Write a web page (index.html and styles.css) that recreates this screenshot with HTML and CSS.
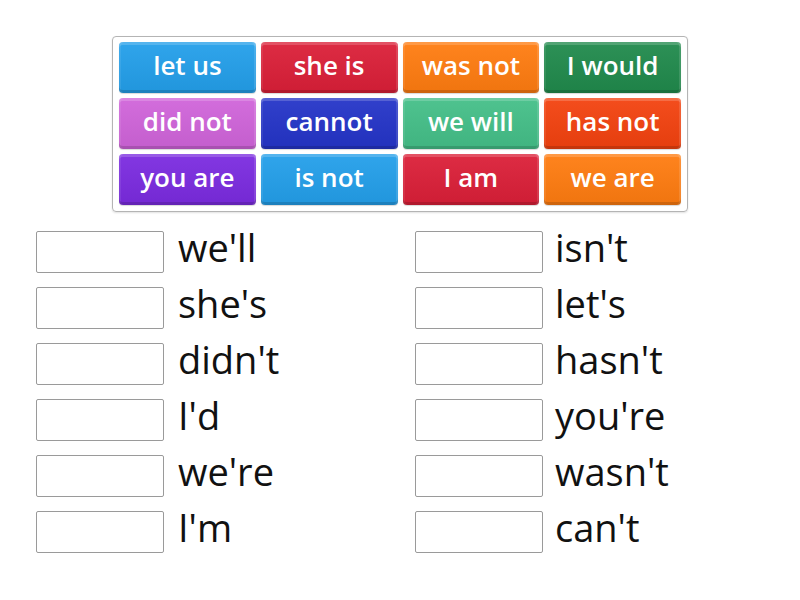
FILE: index.html
```html
<!DOCTYPE html>
<html>
<head>
<meta charset="utf-8">
<link rel="stylesheet" href="styles.css">
</head>
<body>
<div class="page">
  <div class="bank">
    <div class="tile c-blue">let us</div>
    <div class="tile c-red">she is</div>
    <div class="tile c-orange">was not</div>
    <div class="tile c-green">I would</div>
    <div class="tile c-orchid">did not</div>
    <div class="tile c-navy">cannot</div>
    <div class="tile c-mint">we will</div>
    <div class="tile c-vermil">has not</div>
    <div class="tile c-purple">you are</div>
    <div class="tile c-blue">is not</div>
    <div class="tile c-red">I am</div>
    <div class="tile c-orange">we are</div>
  </div>
  <div class="answers">
    <div class="row"><div class="slot"></div><span class="label">we'll</span></div>
    <div class="row right"><div class="slot"></div><span class="label">isn't</span></div>
    <div class="row"><div class="slot"></div><span class="label">she's</span></div>
    <div class="row right"><div class="slot"></div><span class="label">let's</span></div>
    <div class="row"><div class="slot"></div><span class="label">didn't</span></div>
    <div class="row right"><div class="slot"></div><span class="label">hasn't</span></div>
    <div class="row"><div class="slot"></div><span class="label">I'd</span></div>
    <div class="row right"><div class="slot"></div><span class="label">you're</span></div>
    <div class="row"><div class="slot"></div><span class="label">we're</span></div>
    <div class="row right"><div class="slot"></div><span class="label">wasn't</span></div>
    <div class="row"><div class="slot"></div><span class="label">I'm</span></div>
    <div class="row right"><div class="slot"></div><span class="label">can't</span></div>
  </div>
</div>
</body>
</html>
```
FILE: styles.css
```css
html, body {
  margin: 0;
  padding: 0;
  background: #ffffff;
}
body {
  font-family: "Open Sans", "Noto Sans", sans-serif;
  width: 800px;
  height: 600px;
  overflow: hidden;
}
.page {
  padding-top: 36px;
}
.bank {
  width: 562px;
  margin: 0 auto;
  border: 1px solid #b4b4b4;
  border-radius: 4px;
  box-shadow: 0 1px 2px rgba(0,0,0,0.12);
  padding: 5px 6px 6px;
  display: grid;
  grid-template-columns: repeat(4, 1fr);
  grid-auto-rows: 51px;
  gap: 5px;
}
.tile {
  border-radius: 4px;
  color: #ffffff;
  font-weight: 600;
  font-size: 26px;
  display: flex;
  align-items: center;
  justify-content: center;
  padding-bottom: 5px;
  box-sizing: border-box;
  box-shadow: inset 0 3px 0 rgba(255,255,255,0.18), inset 0 -3px 0 rgba(0,0,0,0.14), inset 2px 0 0 rgba(255,255,255,0.08), inset -2px 0 0 rgba(255,255,255,0.12), 0 1px 1px rgba(0,0,0,0.15);
  background-image: linear-gradient(to bottom, rgba(255,255,255,0.06), rgba(0,0,0,0.06));
}
.c-blue { background-color: #239fea; }
.c-red { background-color: #db1f38; }
.c-orange { background-color: #ff7c10; }
.c-green { background-color: #208a4c; }
.c-orchid { background-color: #d064da; }
.c-navy { background-color: #2434c8; }
.c-mint { background-color: #44bf88; }
.c-vermil { background-color: #f3420f; }
.c-purple { background-color: #7b2be0; }

.answers {
  margin-top: 19px;
  padding-left: 36px;
  display: grid;
  grid-template-columns: 379px 379px;
  grid-auto-rows: 42px;
  row-gap: 14px;
}
.row {
  display: flex;
  align-items: center;
}
.slot {
  width: 128px;
  height: 42px;
  box-sizing: border-box;
  border: 1px solid #9a9a9a;
  border-radius: 2px;
  background: #fff;
  flex: none;
}
.label {
  margin-left: 14px;
  font-size: 38px;
  color: #111;
  line-height: 42px;
  position: relative;
  top: -5px;
}
.row.right .label {
  margin-left: 12px;
}
```
